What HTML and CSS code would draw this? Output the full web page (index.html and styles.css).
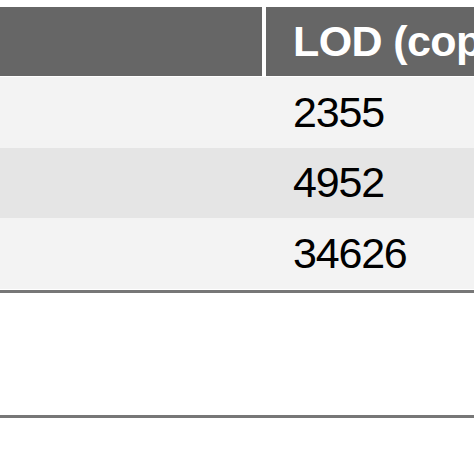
FILE: index.html
```html
<!DOCTYPE html>
<html>
<head>
<meta charset="utf-8">
<link rel="stylesheet" href="styles.css">
</head>
<body>
<div class="page">
  <div class="table">
    <div class="thead">
      <div class="th"></div>
      <div class="th">LOD (copies/mL)</div>
    </div>
    <div class="row light"><div class="td"></div><div class="td">2355</div></div>
    <div class="row dark"><div class="td"></div><div class="td">4952</div></div>
    <div class="row light"><div class="td"></div><div class="td">34626</div></div>
  </div>
  <div class="notes"></div>
</div>
</body>
</html>
```
FILE: styles.css
```css
html, body {
  margin: 0;
  padding: 0;
  background: #ffffff;
  overflow: hidden;
}
.page {
  width: 474px;
  height: 474px;
  overflow: hidden;
  padding-top: 7px;
  box-sizing: border-box;
  font-family: "Liberation Sans", Arial, sans-serif;
  font-size: 43px;
}
.table {
  display: flex;
  flex-direction: column;
  width: 474px;
  border-bottom: 3px solid #777777;
  padding-bottom: 1px;
}
.thead {
  display: grid;
  grid-template-columns: 262px 400px;
  column-gap: 4px;
  height: 69px;
  margin-bottom: 1px;
}
.th {
  background: #666666;
  color: #ffffff;
  font-weight: bold;
  display: flex;
  align-items: center;
  padding-left: 27px;
  white-space: nowrap;
  letter-spacing: -0.6px;
}
.row {
  display: grid;
  grid-template-columns: 266px 1fr;
  height: 70.67px;
}
.row.light { background: #f3f3f3; }
.row.dark { background: #e5e5e5; }
.td {
  display: flex;
  align-items: center;
  padding-left: 27px;
  color: #000000;
  white-space: nowrap;
  letter-spacing: -1.2px;
}
.notes {
  height: 122px;
  border-bottom: 3px solid #777777;
}
```
